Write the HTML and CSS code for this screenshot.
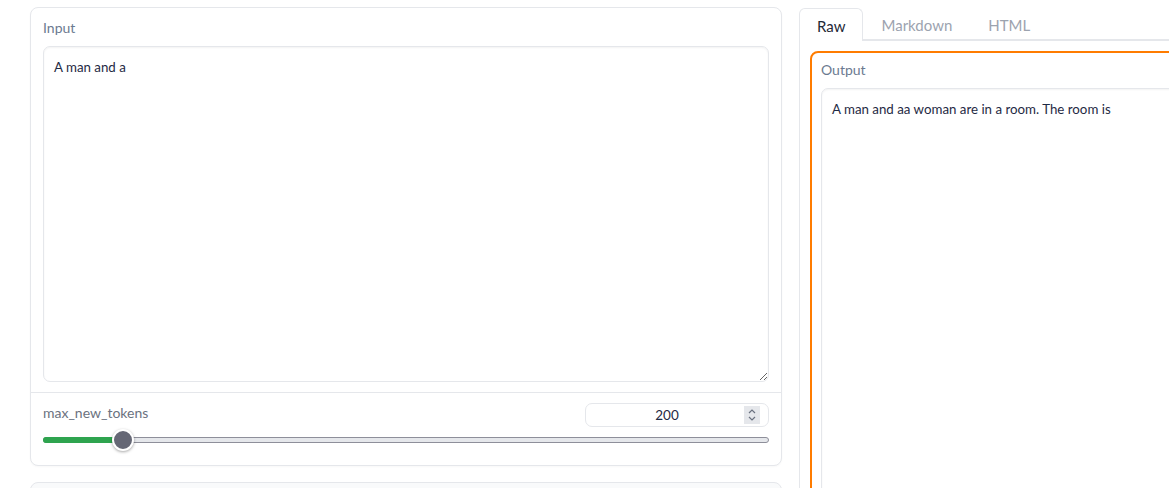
FILE: index.html
```html
<!DOCTYPE html>
<html>
<head>
<meta charset="utf-8">
<link rel="stylesheet" href="styles.css">
</head>
<body>
<div class="page">
  <div class="col col-left">
    <div class="panel">
      <div class="block block-input">
        <label class="label">Input</label>
        <textarea class="textbox tall">A man and a</textarea>
      </div>
      <div class="block block-slider">
        <div class="slider-head">
          <span class="label">max_new_tokens</span>
          <div class="number">
            <span class="number-val">200</span>
            <span class="spinner">
              <svg width="10" height="16" viewBox="0 0 10 16"><path d="M2 6 L5 3 L8 6" fill="none" stroke="#6b7280" stroke-width="1.2"/><path d="M2 10 L5 13 L8 10" fill="none" stroke="#6b7280" stroke-width="1.2"/></svg>
            </span>
          </div>
        </div>
        <div class="track">
          <div class="fill"></div>
          <div class="thumb"></div>
        </div>
      </div>
    </div>
    <div class="panel panel-next"></div>
  </div>
  <div class="col col-right">
    <div class="tabs">
      <button class="tab active">Raw</button>
      <button class="tab">Markdown</button>
      <button class="tab">HTML</button>
    </div>
    <div class="tab-panel">
      <div class="output-box">
        <label class="label">Output</label>
        <textarea class="textbox out">A man and aa woman are in a room. The room is</textarea>
      </div>
    </div>
  </div>
</div>
</body>
</html>
```
FILE: styles.css
```css
html, body {
  margin: 0;
  padding: 0;
  background: #ffffff;
  overflow: hidden;
  height: 488px;
}
body {
  font-family: "Source Sans Pro", Lato, "Open Sans", sans-serif;
  color: #1f2937;
}
.page {
  display: flex;
  gap: 17px;
  padding: 7px 0 0 30px;
  width: 1600px;
}
.col-left {
  width: 752px;
  display: flex;
  flex-direction: column;
  gap: 16px;
}
.panel {
  border: 1px solid #e5e7eb;
  border-radius: 8px;
  background: #fff;
  box-shadow: 0 1px 2px rgba(0,0,0,0.03);
}
.panel-next {
  height: 40px;
  background: #f9fafb;
}
.block-input {
  padding: 12px 12px 10px 12px;
  display: flex;
  flex-direction: column;
  gap: 10px;
}
.label {
  font-size: 14px;
  line-height: 16px;
  color: #6b7a90;
  display: block;
}
.textbox {
  display: block;
  box-sizing: border-box;
  width: 100%;
  border: 1px solid #e5e7eb;
  border-radius: 7px;
  padding: 10px 10px;
  font-family: Lato, "Open Sans", sans-serif;
  font-size: 13.3px;
  line-height: 20px;
  color: #1f2a44;
  background: #fff;
  box-shadow: inset 0 1px 2px rgba(0,0,0,0.05);
  outline: none;
  margin: 0;
}
.tall {
  height: 336px;
  resize: vertical;
}
.block-slider {
  border-top: 1px solid #e5e7eb;
  padding: 10px 12px 22px 12px;
}
.slider-head {
  display: flex;
  justify-content: space-between;
  align-items: center;
  height: 24px;
}
.slider-head .label {
  margin-top: -4px;
  color: #6b7280;
}
.number {
  box-sizing: border-box;
  width: 184px;
  height: 24px;
  border: 1px solid #e5e7eb;
  border-radius: 7px;
  display: flex;
  align-items: center;
  padding-right: 8px;
  font-family: Lato, sans-serif;
  font-size: 13.5px;
  color: #1f2a44;
}
.number-val {
  flex: 1;
  text-align: center;
  padding-left: 4px;
}
.spinner {
  width: 16px;
  height: 18px;
  background: #e5e7eb;
  display: flex;
  align-items: center;
  justify-content: center;
}
.track {
  position: relative;
  margin-top: 10px;
  height: 6px;
  box-sizing: border-box;
  border: 1px solid #8e8f9a;
  border-radius: 3px;
  background: #e5e7eb;
}
.fill {
  width: 79px;
  background: #2ea44f;
  border-radius: 3px 0 0 3px;
  margin: -1px 0 0 -1px;
  height: 6px;
}
.thumb {
  position: absolute;
  left: 68px;
  top: -9px;
  width: 18px;
  height: 18px;
  border-radius: 50%;
  background: #656775;
  border: 2px solid #fff;
  box-shadow: 0 1px 3px rgba(0,0,0,0.35);
}
.col-right {
  width: 760px;
  display: flex;
  flex-direction: column;
}
.tabs {
  display: flex;
  align-items: flex-end;
  border-bottom: 2px solid #e5e7eb;
  padding-top: 1px;
}
.tab {
  font-family: Lato, sans-serif;
  font-size: 15px;
  color: #9ca3af;
  background: transparent;
  border: 1px solid transparent;
  border-bottom: 0;
  padding: 1px 17px 0 17px;
  height: 31px;
  line-height: 30px;
  margin: 0;
  cursor: pointer;
}
.tab.active {
  position: relative;
  color: #1f2937;
  border: 1px solid #e5e7eb;
  border-bottom: 0;
  border-radius: 6px 6px 0 0;
  background: #fff;
  height: 33px;
  margin-bottom: -2px;
}
.tab-panel {
  border-left: 1px solid #e5e7eb;
  padding: 10px 10px 0 10px;
  height: 500px;
}
.output-box {
  border: 2px solid #ff7c00;
  border-radius: 8px;
  padding: 9px 10px 0 9px;
  display: flex;
  flex-direction: column;
  gap: 10px;
  height: 600px;
}
.out {
  height: 500px;
  resize: none;
}
```
